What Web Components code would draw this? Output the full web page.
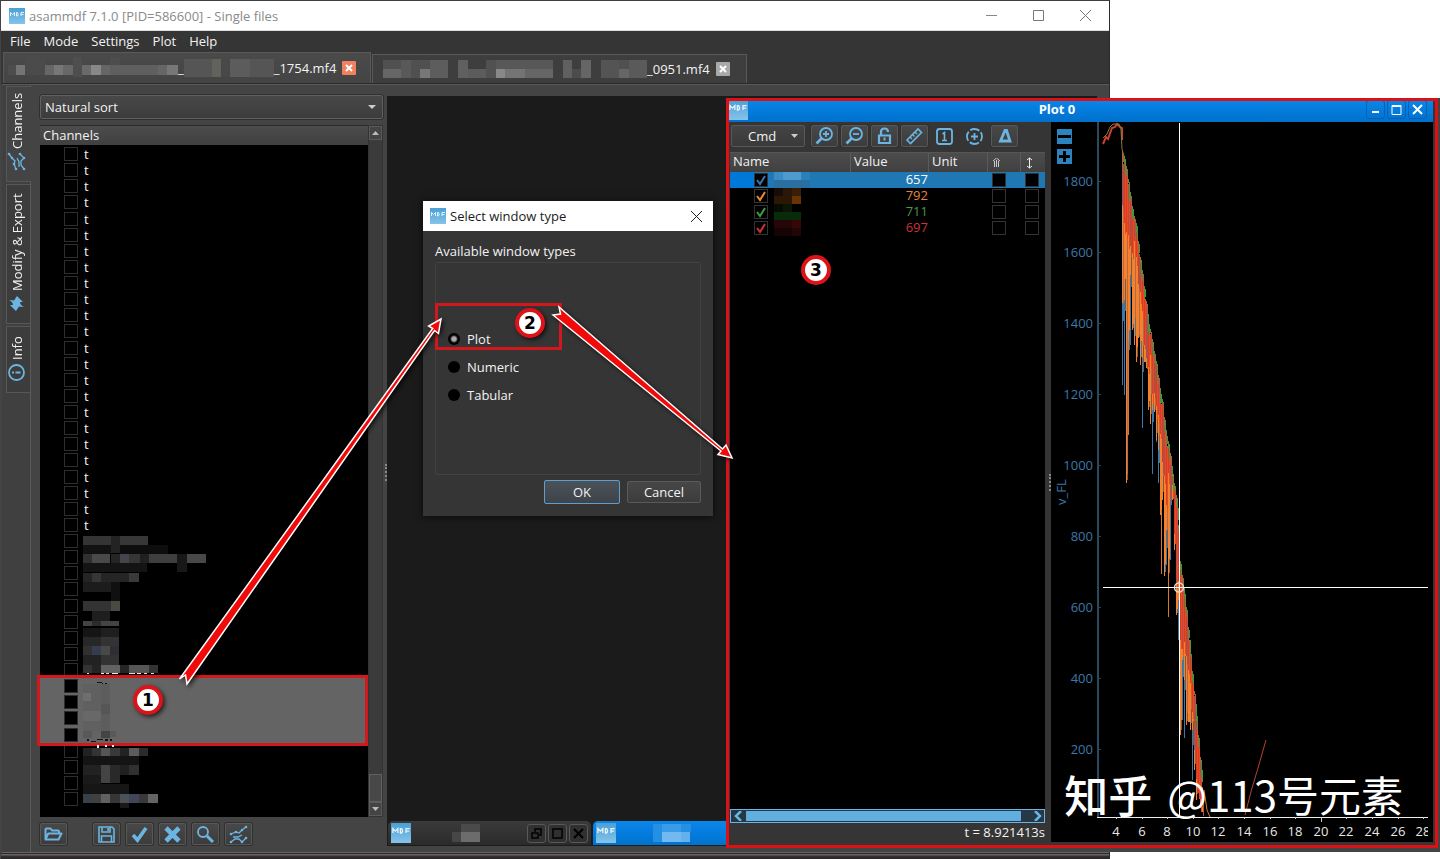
<!DOCTYPE html>
<html lang="en">
<head>
<meta charset="utf-8">
<title>asammdf 7.1.0</title>
<style>
html,body{margin:0;background:#fff}
body{font:13px/18px "Open Sans","Noto Sans CJK SC",sans-serif;color:#f2f2f2;overflow:hidden}
</style>
</head>
<body>
<desk-scene></desk-scene>
<script>
const BASE = `*{box-sizing:border-box}button,select,input{font:inherit;color:inherit;margin:0}
button{padding:0;cursor:default}svg{display:block;flex:none}`;
function define(name, css, html, ready) {
  const tpl = document.createElement('template');
  tpl.innerHTML = `<style>${BASE}${css}</style>${html}`;
  customElements.define(name, class extends HTMLElement {
    constructor() {
      super();
      this.attachShadow({mode: 'open'}).appendChild(tpl.content.cloneNode(true));
    }
    connectedCallback() { if (ready) ready(this, this.shadowRoot); }
  });
}

/* Grids of grey blocks for the redacted names. Each entry: x y w h colour. */
const mosaic = (w, h, cells) =>
  `<svg width="${w}" height="${h}" aria-hidden="true" shape-rendering="crispEdges">` +
  cells.trim().split(/\s*;\s*/).filter(Boolean).map(c => {
    const [x, y, cw, ch, f] = c.split(/\s+/);
    return `<rect x="${x}" y="${y}" width="${cw}" height="${ch}" fill="${f}"/>`;
  }).join('') + '</svg>';

const ICONS = {
  waves: `<g stroke-width="1.300"><path d="M2 9l5-2 3 1 3-3 4-3M2 17l4-3 4 0 3 3 4-4M4 12l5 0 4-2"/></g><g fill="#6cb5e2" stroke="none"><circle cx="2" cy="9" r="1.300"/><circle cx="7" cy="7" r="1.300"/><circle cx="17" cy="2" r="1.300"/><circle cx="13" cy="5" r="1.200"/><circle cx="2" cy="17" r="1.300"/><circle cx="13" cy="17" r="1.300"/><circle cx="17" cy="13" r="1.300"/></g>`,
  folder: `<path d="M1.500 14.500V4.500q0-1 1-1h4l1.500 2h6q1 0 1 1v2M1.500 14.500l2.700-6h13.300l-3 6z" stroke-width="2" stroke-linejoin="round"/>`,
  save: `<path d="M2 2h13l2 2v13H2zM5 2v5h8V2M4.500 17v-6h10v6M11 3v3" stroke-width="1.600"/>`,
  check: `<path d="M3 10l4.500 5L16 3" stroke-width="3.600"/>`,
  cross: `<path d="M3 3l13 13M16 3L3 16" stroke-width="4.600"/>`,
  search: `<circle cx="7" cy="7" r="5"/><path d="M11 11l6 6" stroke-width="3"/>`,
  zoomin: `<circle cx="11" cy="7" r="6"/><path d="M6.500 11.500l-5 5" stroke-width="2.600"/><path d="M8 7h6M11 4v6"/>`,
  zoomout: `<circle cx="11" cy="7" r="6"/><path d="M6.500 11.500l-5 5" stroke-width="2.600"/><path d="M8 7h6"/>`,
  lock: `<path d="M4 8.500h11v7.500H4zM6 8V5q0-3.500 3.500-3.500T13 5" stroke-width="2.200"/><path d="M9.500 10.500v3" stroke-width="2"/>`,
  ruler: `<path d="M2 13L13 2l3.500 3.500L5.500 16.500z" stroke-width="1.600"/><path d="M5 10l2 2M7.500 7.500l2 2M10 5l2 2" stroke-width="1.400"/>`,
  one: `<rect x="2" y="2" width="15" height="15" rx="2.500" stroke-width="1.800"/><path d="M7.500 7l2-1.500v8M7 13.500h5" stroke-width="1.600"/>`,
  target: `<circle cx="9.500" cy="9.500" r="7.500" stroke-dasharray="9.800 2" stroke-dashoffset="4.800" stroke-width="1.800"/><path d="M6 9.500h7M9.500 6v7"/>`,
  delta: `<path d="M5.500 14L10 3.500h1.500L15 14z" stroke-width="2.800"/>`,
  refresh: `<path d="M10 2l-4 6h2.500q0 5 8.500 5-4-2-4-5h3zM9 17l4-6h-2.500q0-5-8.500-5 4 2 4 5H3z" transform="rotate(90 9.500 9.500)" fill="#6cb5e2" stroke="none"/>`,
  info: `<circle cx="9.500" cy="9.500" r="7.500"/><path d="M9.500 8.500v5M9.500 5v2" stroke-width="2.200"/>`
};
define('line-icon', `:host{display:block;width:19px;height:19px}`,
  `<svg width="19" height="19" viewBox="0 0 19 19" fill="none" stroke="#6cb5e2" stroke-width="1.800" aria-hidden="true"></svg>`,
  (el, r) => { r.querySelector('svg').innerHTML = ICONS[el.getAttribute('name')] || ''; });

define('icon-button', `:host{display:block}
button{width:27px;height:22px;display:flex;align-items:center;justify-content:center;border:1px solid #585858;border-radius:2px;background:linear-gradient(#484848,#3c3c3c);box-shadow:0 0 0 1px #303030}
:host([flat]) button{border-color:transparent;background:none;box-shadow:none}`,
  `<button type="button"><line-icon></line-icon></button>`,
  (el, r) => {
    const i = document.createElement('line-icon');
    i.setAttribute('name', el.getAttribute('name'));
    const b = r.querySelector('button');
    b.replaceChildren(i);
    b.setAttribute('aria-label', el.getAttribute('name'));
  });

define('mdf-logo', `:host{display:block;flex:none;width:16px;height:16px}:host([large]){width:20px;height:20px}svg{width:100%;height:100%}`,
  `<svg viewBox="0 0 16 16" aria-hidden="true"><defs><linearGradient id="g" x2="0" y2="1"><stop offset="0" stop-color="#4aa0d6"/><stop offset="1" stop-color="#86c4ea"/></linearGradient></defs><rect width="16" height="16" fill="url(#g)"/><path d="M1.500 8V4.500L3.500 6.500l2-2V8M7.500 4.500V8h1q1.500-1.700 0-3.500zM12 8V4.500h3M12 6.500h2.500" fill="none" stroke="#e6f3fb"/></svg>`);

define('step-badge', `:host{position:absolute;width:30px;height:30px;display:grid;place-items:center;border:4px solid #dc1419;border-radius:50%;background:#fff;color:#000;font:bold 17px/22px "DejaVu Sans",sans-serif;box-shadow:2px 2px 4px #000a}`,
  `<slot></slot>`);

define('title-bar', `:host{display:flex;align-items:center;height:30px;background:#fff;color:#8a8a8a;padding-left:8px;border-bottom:1px solid #ddd}
.name{margin-left:4px;flex:1}button{width:47px;height:29px;border:0;background:none;display:grid;place-items:center}`,
  `<mdf-logo></mdf-logo><span class="name"><slot></slot></span>
  <button type="button" aria-label="Minimize"><svg width="11" height="11" stroke="#888" fill="none"><path d="M0 5.500h11"/></svg></button>
  <button type="button" aria-label="Maximize"><svg width="11" height="11" stroke="#777" fill="none"><path d="M.5.500h10v10H.5z"/></svg></button>
  <button type="button" aria-label="Close"><svg width="11" height="11" stroke="#777" fill="none"><path d="M0 0l11 11M11 0L0 11"/></svg></button>`);

define('menu-bar', `:host{display:flex;align-items:center;gap:13px;height:20px;padding-left:9px;background:#353535}button{border:0;background:none}`,
  ['File', 'Mode', 'Settings', 'Plot', 'Help'].map(t => `<button type="button">${t}</button>`).join(''));

define('file-tabs', `:host{display:flex;align-items:flex-end;gap:1px;height:33px;padding-left:2px;background:#353535;border-bottom:1px solid #2a2a2a}
.tab{display:flex;align-items:center;height:29px;width:375px;padding:0 0 0 10px;border:1px solid #595959;border-bottom:0;background:#3e3e3e}
.tab.on{height:31px;width:368px;padding:0 0 0 4px;background:linear-gradient(#4a4a4a,#444)}
.close{flex:none;width:14px;height:14px;margin-left:6px;border:0;border-radius:1px;background:#a9a9a9;display:grid;place-items:center}.on .close{background:#f0805f}`,
  `<div class="tab on" role="tab">${mosaic(170, 22, `0 8 8 10 #4d4d4d;8 8 9 10 #747474;17 0 20 18 #4b4b4b;37 8 9 10 #666;46 8 9 10 #777;55 8 10 10 #686868;65 0 9 20 #4e4e4e;74 8 9 10 #6a6a6a;83 8 10 10 #888;93 8 9 10 #666;102 8 48 10 #5f5f5f;102 0 10 8 #4d4d4d;150 8 9 10 #666;159 8 11 10 #777`)}<span>_</span>${mosaic(90, 18, `0 0 28 18 #555;28 0 9 18 #62625d;37 0 9 18 #484848;46 0 20 18 #5c5c5c;66 0 24 18 #555`)}<span>_1754.mf4</span><button class="close" type="button" aria-label="Close tab"><svg width="8" height="8" stroke="#fff" stroke-width="2"><path d="M1 1l6 6M7 1L1 7"/></svg></button></div>
  <div class="tab" role="tab">${mosaic(264, 18, `0 0 18 9 #505050;0 9 18 9 #666;18 0 10 18 #595959;28 0 19 18 #505050;37 9 10 9 #777;47 0 18 18 #5d5d5d;75 0 10 18 #606060;85 9 18 9 #5c5c5c;103 0 10 18 #515151;113 0 57 9 #585858;113 9 9 9 #888;122 9 20 9 #747474;142 9 28 9 #666;180 0 9 18 #606060;189 9 9 9 #4c4c4c;198 0 10 18 #656565;218 0 18 18 #545454;236 0 10 9 #505050;236 9 10 9 #666;246 0 18 18 #5a5a5a`)}<span>_0951.mf4</span><button class="close" type="button" aria-label="Close tab"><svg width="8" height="8" stroke="#fff" stroke-width="2"><path d="M1 1l6 6M7 1L1 7"/></svg></button></div>`);

define('side-tabs', `:host{display:flex;flex-direction:column;gap:2px;width:29px;padding:1px 0 0 4px;border-right:1px solid #5a5a5a;background:#404040}
button{writing-mode:vertical-rl;transform:rotate(180deg);display:flex;align-items:center;gap:3px;width:24px;margin-right:1px;padding:10px 0 10px 4px;border:1px solid #575757;border-left:0;background:#3c3c3c;white-space:nowrap}
button.on{background:#444;width:25px;margin:0}
line-icon{transform:rotate(90deg)}
.a{height:96px}.b{height:140px}.c{height:67px}`,
  `<button type="button" class="a on"><line-icon name="waves"></line-icon>Channels</button><button type="button" class="b"><line-icon name="refresh"></line-icon>Modify &amp; Export</button><button type="button" class="c"><line-icon name="info"></line-icon>Info</button>`);

const chanRow = t => `<label class="row"><input type="checkbox" aria-label="channel"><span>${t}</span></label>`;
define('channel-panel', `:host{display:flex;flex-direction:column;width:343px;margin-left:9px;padding:10px 0 7px}
select{appearance:none;height:24px;padding:0 4px;border:1px solid #606060;border-radius:2px;outline:1px solid #303030;color:#f2f2f2;line-height:18px;background:url("data:image/svg+xml,%3Csvg xmlns='http://www.w3.org/2000/svg' width='8' height='4'%3E%3Cpath d='M0 0h8L4 4z' fill='%23ccc'/%3E%3C/svg%3E") no-repeat right 6px center,linear-gradient(#484848,#3c3c3c)}
.tree{flex:1;display:flex;margin-top:6px;min-height:0}
.list{flex:1;display:flex;flex-direction:column;background:#000}
.head{height:20px;padding-left:3px;background:linear-gradient(#4c4c4c,#404040);border-top:1px solid #2a2a2a}
.rows{flex:1;display:flex;flex-direction:column;position:relative;padding:1px 0 10px}
.row{flex:1;display:flex;align-items:center;gap:6px;padding-left:24px;line-height:16px;min-height:0}
input{appearance:none;width:14px;height:14px;border:1px solid #2e2e2e;background:#000}
.sel{flex:4;display:flex;flex-direction:column;position:relative;background:#646464}
.sel:after{content:"";position:absolute;inset:-3px 0 -3px -3px;border:3px solid #d2181c}
step-badge{left:93px;top:7px;z-index:2}
.blur{position:absolute;left:43px;top:391px}.blur2{position:absolute;left:43px;top:1px}
.bar{width:15px;display:flex;flex-direction:column;border:1px solid #333;background:#3b3b3b}
.bar button{height:14px;border:1px solid #5a5a5a;background:#444;display:grid;place-items:center}.track{flex:1}
.thumb{height:28px;border:1px solid #606060;background:#484848}
.tools{display:flex;gap:6px;margin-top:6px}.tools icon-button:first-child{margin-right:20px}`,
  `<select aria-label="Sort"><option>Natural sort</option></select>
  <div class="tree"><div class="list"><div class="head">Channels</div><div class="rows">
  ${chanRow('t').repeat(24)}${chanRow('').repeat(9)}<div class="sel">${chanRow('').repeat(4)}<span class="blur2">${mosaic(36, 66, `14 3 5 1 #111;19 4 1 1 #111;22 4 2 1 #111;0 5 18 50 #606060;18 5 9 50 #5d5d5d;0 14 8 8 #6e6e6e;0 32 18 10 #686868;18 25 9 10 #565656;0 52 9 7 #585858;9 52 9 7 #636363;18 52 9 7 #444;27 52 6 6 #595959;4 60 2 2 #111;8 62 5 1 #111;14 60 6 1 #111;22 60 3 2 #111;27 60 2 2 #111`)}</span><step-badge>1</step-badge></div>${chanRow('').repeat(4)}
  <span class="blur">${mosaic(130, 275, `0 0 28 9 #343434;28 0 9 17 #232323;37 0 28 9 #373737;0 9 28 9 #121212;37 9 48 9 #0d0d0d;0 18 9 9 #303030;9 18 18 9 #494949;28 18 9 9 #252525;37 18 9 9 #46434a;46 18 11 9 #363636;57 18 9 9 #202020;66 18 28 9 #3e3e3e;94 18 10 18 #181818;104 18 19 9 #484848;0 27 64 9 #141414;0 37 9 9 #242424;9 37 9 9 #383533;18 37 28 9 #252525;46 37 10 9 #3a3a3a;0 46 28 10 #1c1c1c;28 46 9 20 #101010;0 65 28 10 #333;28 65 9 10 #4a4943;9 75 18 10 #1e1e1e;0 85 9 5 #444;9 85 9 5 #2c2c2c;18 85 18 5 #444;0 92 18 10 #151515;18 92 18 10 #1f1f1f;0 101 18 10 #272727;18 101 18 10 #333;0 110 9 9 #303030;9 110 9 9 #343c4d;18 110 9 9 #494949;27 110 9 9 #302e35;0 119 18 10 #222;18 119 18 10 #333;0 129 9 8 #333;9 129 9 8 #242424;18 129 19 8 #626262;37 129 9 8 #252525;46 129 20 8 #555;66 129 9 8 #333;4 137 2 1 #ddd;18 137 3 1 #eee;23 137 3 1 #ddd;29 137 6 1 #eee;46 137 6 1 #ddd;54 137 4 1 #eee;61 137 3 1 #ddd;68 137 3 1 #ddd;14 209 2 3 #eee;22 209 2 2 #eee;29 209 2 2 #eee;0 212 9 8 #222;9 212 9 8 #333;18 212 9 8 #555;27 212 10 8 #393939;37 212 9 8 #222;46 212 10 8 #5c5c5c;56 212 9 8 #2b2b2b;0 220 56 9 #141414;0 229 18 10 #222;18 229 9 18 #444;27 229 10 18 #292929;37 229 9 10 #202020;46 229 10 10 #303030;0 239 18 10 #1a1a1a;0 248 46 10 #161616;0 258 9 9 #38404a;9 258 9 9 #42403d;18 258 9 9 #606060;27 258 10 9 #363636;37 258 9 9 #4c5057;46 258 10 9 #404558;56 258 9 9 #393939;65 258 10 9 #646464;37 267 9 5 #191919`)}</span>
  </div></div>
  <div class="bar"><button type="button" aria-label="Scroll up"><svg width="7" height="4"><path d="M0 4h7L3.500 0z" fill="#bbb"/></svg></button><span class="track"></span><span class="thumb"></span><button type="button" aria-label="Scroll down"><svg width="7" height="4"><path d="M0 0h7L3.500 4z" fill="#bbb"/></svg></button></div></div>
  <div class="tools">${['folder', 'save', 'check', 'cross', 'search', 'waves'].map(n => `<icon-button name="${n}"></icon-button>`).join('')}</div>`);

define('mdi-area', `:host{flex:1;display:flex;align-items:flex-end;gap:2px;margin:11px 12px 6px 4px;padding:0 0 1px 1px;background:#1b1b1b;position:relative}
.grip{position:absolute;left:-2px;top:368px;height:17px;border-left:2px dotted #888}
.min{display:flex;align-items:center;width:203px;height:24px;padding:0 3px;background:linear-gradient(#3a3a3a,#2b2b2b);border-radius:5px 5px 0 0}
.min.on{background:linear-gradient(#0a86ea,#0073cf)}
.name{flex:1;padding-left:41px}.on .name{padding-left:37px}
button{width:19px;height:19px;margin-left:2px;border:1px solid #595959;border-radius:3px;background:#303030;display:grid;place-items:center}`,
  `<span class="grip"></span><div class="min"><mdf-logo large></mdf-logo><span class="name">${mosaic(28, 18, `0 8 9 10 #464646;9 0 19 8 #4a4a4a;9 8 19 10 #6c6c6c`)}</span>
  <button type="button" aria-label="Restore"><svg width="11" height="11" fill="none" stroke="#000" stroke-width="1.500"><path d="M1 5h6v5H1zM4 4V1h6v6H8"/></svg></button><button type="button" aria-label="Maximize"><svg width="11" height="11" fill="none" stroke="#000" stroke-width="1.500"><path d="M1 1h9v9H1z"/></svg></button><button type="button" aria-label="Close"><svg width="11" height="11" stroke="#000" stroke-width="2"><path d="M1 1l9 9M10 1l-9 9"/></svg></button></div>
  <div class="min on"><mdf-logo large></mdf-logo><span class="name">${mosaic(38, 18, `0 0 9 18 #2490e4;9 0 19 8 #3a9ce8;9 8 19 10 #73b8ee;28 0 10 8 #2490e4;28 8 9 10 #64b0ec`)}</span></div>`);

define('app-window', `:host{display:flex;flex-direction:column;width:calc(75% + 30px);min-height:100vh;padding-left:1px;border-top:1px solid #3d3f44;border-right:1px solid #2a2a2a;background:#444}
.body{flex:1;display:flex;margin-left:1px;border-top:1px solid #5a5a5a;border-bottom:1px solid #6b6363}
.foot{height:6px;background:linear-gradient(#2a2a2a 1px,#6b6363 1px,#6b6363 2px,#333 3px,#262626)}`,
  `<title-bar>asammdf 7.1.0 [PID=586600] - Single files</title-bar><menu-bar></menu-bar><file-tabs></file-tabs>
  <div class="body"><side-tabs></side-tabs><channel-panel></channel-panel><mdi-area></mdi-area></div><div class="foot"></div>`);

define('type-dialog', `:host{position:absolute;left:calc(30% - 9px);top:201px;width:290px;background:#353535;box-shadow:0 1px 8px #000a}
header{display:flex;align-items:center;height:30px;padding:0 11px 0 7px;background:#fff;color:#1c1c1c}
header span{flex:1;margin-left:4px}header button{border:0;background:none}
form{padding:11px 12px 12px}
.group{position:relative;display:flex;flex-direction:column;justify-content:center;gap:10px;height:213px;margin-top:2px;padding:0 0 4px 12px;border:1px solid #424242;border-radius:2px}
label{display:flex;align-items:center;gap:7px;height:18px}
input{appearance:none;width:12px;height:12px;border-radius:50%;background:#000}
input:checked{background:radial-gradient(#aaa 0 2px,#000 4px)}
.mark{position:absolute;left:-1px;top:40px;width:127px;height:47px;border:3px solid #d2181c}
step-badge{left:79px;top:45px}
.acts{display:flex;justify-content:flex-end;align-items:center;gap:7px;margin-top:5px}
.acts button{width:74px;height:22px;border:1px solid #5a5a5a;border-radius:2px;background:linear-gradient(#474747,#3c3c3c)}
.acts .ok{width:76px;height:24px;border-color:#5f9fd0;background:linear-gradient(#4b5258,#3e4449)}`,
  `<header><mdf-logo></mdf-logo><span>Select window type</span><button type="button" aria-label="Close"><svg width="11" height="11" stroke="#222" fill="none"><path d="M0 0l11 11M11 0L0 11"/></svg></button></header>
  <form><div>Available window types</div><div class="group">
  <label><input type="radio" name="w" checked>Plot</label><label><input type="radio" name="w">Numeric</label><label><input type="radio" name="w">Tabular</label>
  <span class="mark"></span><step-badge>2</step-badge></div>
  <div class="acts"><button type="button" class="ok">OK</button><button type="button">Cancel</button></div></form>`);

const signals = [
  ['657', '#fff', `0 0 9 8 #3a8cc4;9 0 18 8 #4e9ace;27 0 9 8 #2a80bb;0 8 36 8 #2b6ea0`, '#3f76ac'],
  ['792', '#e8853a', `0 0 9 8 #160d06;9 0 9 8 #2a1707;18 0 9 8 #3a1e08;0 8 18 8 #2c1705;18 8 9 8 #693404`, '#ee8a2e'],
  ['711', '#4a9a44', `0 0 9 8 #060c02;9 0 9 8 #0d1604;0 8 27 8 #082b0a`, '#3f9e3c'],
  ['697', '#cc3339', `0 0 27 8 #260608;18 0 9 8 #360709;0 8 18 8 #160405;18 8 9 8 #220506`, '#d0303a']
];
define('signal-table', `:host{display:block;flex:1;background:#000;position:relative}
table{width:100%;table-layout:fixed;border-collapse:separate;border-spacing:0}
th{height:20px;padding:0 0 0 3px;text-align:left;vertical-align:top;font-weight:400;line-height:16px;background:linear-gradient(#4c4c4c,#404040);border-right:1px solid #5b5b5b;border-top:1px solid #555}
th:nth-child(4),th:nth-child(5){padding-left:5px}th:last-child{border:0;border-top:1px solid #555}th svg{display:inline-block;vertical-align:middle}
td{height:16px;padding:0;line-height:14px;vertical-align:top}
tr.on td{background:#1f77b4}tr.on td:first-child{background:linear-gradient(90deg,#0078d7 24px,#1f77b4 24px)}
.v{text-align:right;padding-right:1px}.n{display:flex;height:16px;gap:6px;padding-left:24px;align-items:center}
input{appearance:none;display:block;width:14px;height:14px;border:1px solid #333;background:#000}td>input{margin:1px 0 0 4px}
.n label{position:relative}.tick{position:absolute;left:2px;top:2px}
step-badge{left:71px;top:103px}`,
  `<table><colgroup><col style="width:121px"><col style="width:78px"><col style="width:59px"><col style="width:33px"><col></colgroup>
  <thead><tr><th>Name</th><th>Value</th><th>Unit</th><th aria-label="Common axis"><svg width="7" height="9" stroke="#eee" fill="none" stroke-width=".8"><path d="M0 3l3.500-3L7 3M1.500 3v6M3.500 2v7M5.500 3v6"/></svg></th><th aria-label="Individual axis"><svg width="7" height="12" stroke="#eee" fill="none"><path d="M1 3l2.500-2L6 3M3.500 1v10M1 9l2.500 2L6 9"/></svg></th></tr></thead>
  <tbody>${signals.map((s, i) => `<tr class="${i ? '' : 'on'}"><td><div class="n"><label><input type="checkbox" checked aria-label="Show signal"><svg class="tick" width="10" height="11" fill="none" stroke="${s[3]}" stroke-width="2"><path d="M1 5l3 4 5-8"/></svg></label>${mosaic(36, 16, s[2])}</div></td><td class="v" style="color:${s[1]}">${s[0]}</td><td></td><td><input type="checkbox" aria-label="Common"></td><td><input type="checkbox" aria-label="Individual"></td></tr>`).join('')}</tbody></table><step-badge>3</step-badge>`);

/* One column of the decaying trace: x, top, end of the red part, end of the orange part, end of the blue part. */
const columns = [
[1122,150,205,303,385],[1124,155,230,300,395],[1126,165,235,483,483],[1128,178,245,360,360],[1130,192,252,275,345],[1132,205,255,330,330],[1134,215,250,345,345],[1136,222,262,362,362],[1138,240,285,338,338],[1140,256,300,365,365],[1142,270,315,358,428],[1144,285,345,362,362],[1146,300,365,368,368],[1148,320,370,410,410],[1150,328,365,424,424],[1152,338,400,410,474],[1154,350,395,412,412],[1156,360,415,440,442],[1158,374,420,450,483],[1160,390,435,515,515],[1162,398,470,500,500],[1164,416,480,576,576],[1166,432,505,530,565],[1168,440,480,580,580],[1170,452,500,490,560],[1172,470,495,500,500],[1174,482,540,550,550],[1176,494,585,615,615],[1178,524,590,600,640],[1180,560,645,735,735],[1182,574,650,660,720],[1184,590,650,680,738],[1186,606,660,725,725],[1188,626,670,722,722],[1190,650,690,730,730],[1192,670,715,730,780],[1194,690,760,770,770],[1196,712,785,800,800],[1198,734,795,790,790],[1200,756,808,808,808],[1202,790,812,812,812]];
const trace = columns.map(([x, t, r, o, b], i) => {
  const bar = (px, y1, y2, c) => y2 > y1 ? `<path d="M${px}.5 ${y1}V${y2}" stroke="${c}"/>` : '';
  const jag = (i * 7) % 11;
  return bar(x, r - 25, b, '#3c78a8') + bar(x + 1, r, Math.min(b, o + 18) - jag, i % 3 ? '#7b5a48' : '#3c78a8') +
    bar(x, r - 20, o, '#f5822a') + bar(x + 1, r - 16, o - jag * 3, i % 2 ? '#f5822a' : '#b06a50') +
    bar(x, t + 6, r - jag, i % 3 ? '#d83a28' : '#b8484c') + bar(x + 1, t + 14, r + 4, i % 4 ? '#ea4a20' : '#9a5a50') +
    bar(x, t + 1, t + 15 - jag, i % 3 ? '#5c8a3a' : '#a8663c') + bar(x + 1, t + 4, t + 12 + jag, i % 2 ? '#3f9a3c' : '#a4603c') +
    (i % 3 ? '' : bar(x + 2, t + 14, t + 26, '#3f9a3c'));
}).join('');
const yLabels = [[1800,181],[1600,252],[1400,323],[1200,394],[1000,465],[800,536],[600,607],[400,678],[200,749]];
define('signal-chart', `:host{display:block;flex:1;background:#000;position:relative;overflow:hidden}
svg{font:13px "Open Sans",sans-serif}
.wm{position:absolute;right:30px;bottom:27px;display:flex;align-items:center;gap:15px;white-space:nowrap;color:#fff;font:42px/42px "Noto Sans CJK SC",sans-serif}
.wm b{font-size:44px;font-weight:500}`,
  `<svg width="377" height="720" viewBox="1051 122 377 720" fill="none">
  <g fill="#2b83c0"><path d="M1057 129h15v15h-15zM1057 149h15v15h-15z"/></g><path d="M1058 136.500h13M1059 156.500h11M1064.500 151v11" stroke="#000" stroke-width="3"/>
  <path d="M1098 122V817" stroke="#2a4a60" stroke-width="2"/>
  <path d="M1097 817.500H1428" stroke="#eee"/>
  ${yLabels.map(([t, y]) => `<text x="1093" y="${y + 5}" text-anchor="end" fill="#3f78a8">${t}</text><path d="M1098 ${y}.5h3" stroke="#26475f"/>`).join('')}
  ${[4,6,8,10,12,14,16,18,20,22,24,26,28].map((t, i) => { const x = 1116 + Math.round(i * 25.6); return `<text x="${x}" y="836" text-anchor="middle" fill="#e8e8e8">${t}</text><path d="M${x}.5 817v${t === 20 ? 5 : 2}" stroke="#ccc"/>`; }).join('')}
  <text transform="translate(1066 505) rotate(-90)" fill="#3f78a8">v_FL</text>
  <path d="M1103 144l3-7 2 2 4-11 3-1 2-3 3 3 2 1v12" stroke="#c9412f" stroke-width="2"/><path d="M1103 138l4-4 3-7 3-3h6l2 5 1 20 2 7" stroke="#8a7a3c"/>
  ${trace}
  <path d="M1128.500 340V435M1168.500 575v42M1161.500 510v64M1204 790l3 20 3 7" stroke="#d9772f"/>
  <path d="M1245 815l7-27 6-20 8-28" stroke="#b04436"/>
  <path d="M1179.500 123V817M1103 587.500H1428" stroke="#fff"/><circle cx="1179" cy="587.500" r="4.500" stroke="#ddd" stroke-width="1.500"/>
  </svg><div class="wm"><b>知乎</b><span>@113号元素</span></div>`);

define('plot-window', `:host{position:absolute;left:calc(50% + 6px);right:0;top:98px;height:754px;background:#444}
.frame{height:750px;margin-right:2px;padding:2px 5px 6px 2px;background:#353535;display:flex;flex-direction:column;position:relative}
.red{position:absolute;inset:0;border:3px solid #dc1015;pointer-events:none}
header{display:flex;align-items:flex-start;height:22px;padding:0 6px 0 0;background:linear-gradient(#0a86ea,#0070cc);color:#fff;font-weight:700;gap:2px}
header span{flex:1;text-align:center}header button{width:19px;height:19px;border:1px solid #0a5fae;border-radius:3px;background:none;display:grid;place-items:center}
.body{flex:1;display:flex;min-height:0}
.left{display:flex;flex-direction:column;width:317px;padding:3px 0 0 2px}
.tools{display:flex;align-items:center;gap:3px;height:22px;margin-bottom:5px;padding-left:1px}
.cmd{width:74px;height:22px;margin-right:3px;padding:0 6px 0 16px;display:flex;align-items:center;justify-content:space-between;border:1px solid #585858;border-radius:2px;background:linear-gradient(#444,#3a3a3a)}
.scroll{display:flex;align-items:center;height:14px;border:1px solid #6cb5e2;background:#263845}
.scroll button{width:13px;height:12px;border:0;background:none;display:grid;place-items:center}
.thumb{flex:1;height:10px;margin:0 10px 0 2px;background:#61afe0}
.time{height:19px;text-align:right}
.split{width:6px;display:flex;align-items:center;justify-content:flex-end}.split i{height:17px;border-left:2px dotted #888}`,
  `<div class="frame"><header><mdf-logo large></mdf-logo><span>Plot 0</span>
  <button type="button" aria-label="Minimize"><svg width="11" height="11" stroke="#fff" stroke-width="2"><path d="M2 8h7"/></svg></button><button type="button" aria-label="Maximize"><svg width="11" height="11" fill="none" stroke="#fff"><path d="M1 1.500h9v9H1zM1 2.500h9"/></svg></button><button type="button" aria-label="Close"><svg width="11" height="11" stroke="#fff" stroke-width="2"><path d="M1 1l9 9M10 1l-9 9"/></svg></button></header>
  <div class="body"><div class="left"><div class="tools"><button type="button" class="cmd">Cmd<svg width="7" height="4"><path d="M0 0h7L3.500 4z" fill="#ccc"/></svg></button>
  ${['zoomin', 'zoomout', 'lock', 'ruler', 'one', 'target', 'delta'].map(n => `<icon-button name="${n}"${n === 'one' || n === 'target' ? ' flat' : ''}></icon-button>`).join('')}</div>
  <signal-table></signal-table>
  <div class="scroll"><button type="button" aria-label="Scroll left"><svg width="8" height="10" fill="none" stroke="#6cb5e2" stroke-width="2.500"><path d="M7 0L2 5l5 5"/></svg></button><span class="thumb"></span><button type="button" aria-label="Scroll right"><svg width="8" height="10" fill="none" stroke="#6cb5e2" stroke-width="2.500"><path d="M1 0l5 5-5 5"/></svg></button></div>
  <div class="time">t = 8.921413s</div></div><div class="split"><i></i></div><signal-chart></signal-chart></div><div class="red"></div></div>`);

define('guide-arrows', `:host{position:absolute;inset:0;pointer-events:none}svg{width:100%;height:100%;filter:drop-shadow(2px 2px 2px #000a)}`,
  `<svg viewBox="0 0 1440 859" preserveAspectRatio="none" fill="#f00a0a" stroke="#fff" stroke-width="1.500">
  <path d="M179.500 679L432.700 328.500 428.600 326 441 319 438.500 333.500 434.500 330.500 187 684 185.500 675z"/>
  <path d="M553 315L721 451 718 454.500 732 458 726 445 722.500 449 559 307 560.500 314z"/></svg>`);

define('desk-scene', `:host{display:block;position:relative;min-height:100vh}`,
  `<app-window></app-window><type-dialog></type-dialog><plot-window></plot-window><guide-arrows></guide-arrows>`);
</script>
</body>
</html>
